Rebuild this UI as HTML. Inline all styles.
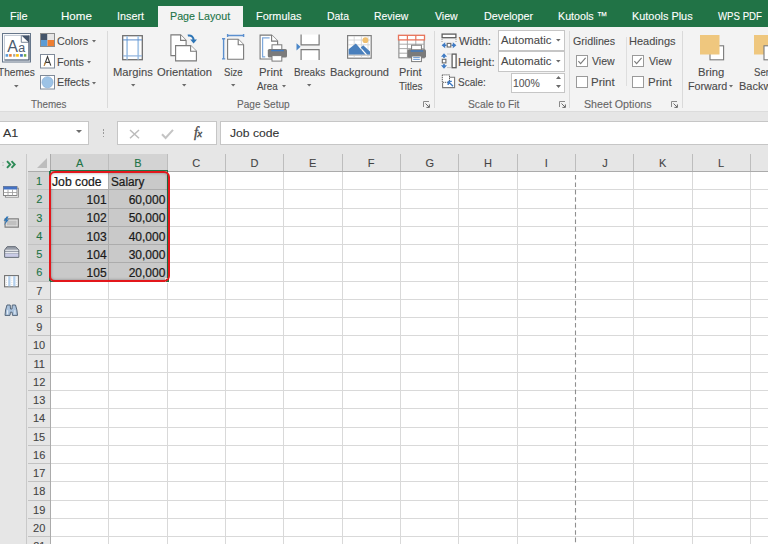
<!DOCTYPE html>
<html><head><meta charset="utf-8">
<style>
html,body{margin:0;padding:0;}
body{width:768px;height:544px;overflow:hidden;position:relative;background:#e6e6e6;font-family:"Liberation Sans",sans-serif;}
.a{position:absolute;}
.t{position:absolute;white-space:pre;line-height:1;transform-origin:0 0;-webkit-text-stroke:0.1px currentColor;font-family:"Liberation Sans",sans-serif;}
.sep{position:absolute;width:1px;background:#d2d2d2;}
.arr{position:absolute;width:0;height:0;border-left:2.5px solid transparent;border-right:2.5px solid transparent;border-top:3px solid #6a6a6a;}
svg{position:absolute;overflow:visible;}
</style></head><body>
<!-- tab bar -->
<div class="a" style="left:0;top:0;width:768px;height:27px;background:#217346"></div>
<div class="a" style="left:158px;top:5.5px;width:84.5px;height:22px;background:#f3f3f3"></div>
<!-- ribbon -->
<div class="a" style="left:0;top:27px;width:768px;height:83.8px;background:#f3f3f3;border-bottom:1px solid #dcdcdc"></div>
<div class="a" style="left:106.5px;top:31px;width:1px;height:77px;background:#dadada;"></div>
<div class="a" style="left:434px;top:31px;width:1px;height:77px;background:#dadada;"></div>
<div class="a" style="left:568.5px;top:31px;width:1px;height:77px;background:#dadada;"></div>
<div class="a" style="left:681.5px;top:31px;width:1px;height:77px;background:#dadada;"></div>
<div class="a" style="left:625.5px;top:37px;width:1px;height:49px;background:#dedede;"></div>
<div class="a" style="left:-1px;top:121.2px;width:89.5px;height:23.6px;background:#fff;box-sizing:border-box;border:1px solid #c6c6c6"></div>
<div class="a" style="left:76.2px;top:130.2px;width:0;height:0;border-left:3.4px solid transparent;border-right:3.4px solid transparent;border-top:3.6px solid #6d6d6d"></div>
<div class="a" style="left:102.5px;top:129px;width:1.2px;height:1.6px;background:#9a9a9a;"></div>
<div class="a" style="left:102.5px;top:132.3px;width:1.2px;height:1.6px;background:#9a9a9a;"></div>
<div class="a" style="left:102.5px;top:135.6px;width:1.2px;height:1.6px;background:#9a9a9a;"></div>
<div class="a" style="left:117px;top:121.2px;width:99.5px;height:23.6px;background:#fff;box-sizing:border-box;border:1px solid #c6c6c6"></div>
<div class="a" style="left:220px;top:121.2px;width:560px;height:23.6px;background:#fff;box-sizing:border-box;border:1px solid #c6c6c6"></div>
<svg style="left:128.5px;top:128.5px" width="11" height="10"><path d="M1 1L10 9.2M10 1L1 9.2" stroke="#bcbcbc" stroke-width="1.5" fill="none"/></svg>
<svg style="left:160.5px;top:128.5px" width="13" height="10.5"><path d="M1 5.2L4.6 9L12 0.8" stroke="#c4c4c4" stroke-width="2" fill="none"/></svg>
<div class="t" style="left:194px;top:126.2px;font-family:'Liberation Serif',serif;font-style:italic;font-size:14px;color:#4a4a4a;letter-spacing:-0.6px;-webkit-text-stroke:0.35px #4a4a4a">f<span style="font-size:11px">x</span></div>
<div class="a" style="left:25.8px;top:154px;width:1.6px;height:390px;background:#c9c9c9;"></div>
<div class="a" style="left:27.5px;top:171px;width:740.5px;height:373px;background:#fff;"></div>
<div class="a" style="left:27.5px;top:171px;width:23px;height:373px;background:#e6e6e6;"></div>
<div class="a" style="left:50.5px;top:154px;width:116.6666px;height:17px;background:#d3d3d3;"></div>
<div class="a" style="left:27.5px;top:171px;width:23px;height:109.5px;background:#d3d3d3;"></div>
<div class="a" style="left:50.0px;top:154px;width:1px;height:17px;background:#bdbdbd;"></div>
<div class="a" style="left:108.33330000000001px;top:171px;width:1px;height:373px;background:#d9d9d9;"></div>
<div class="a" style="left:108.33330000000001px;top:154px;width:1px;height:17px;background:#bdbdbd;"></div>
<div class="a" style="left:166.66660000000002px;top:171px;width:1px;height:373px;background:#d9d9d9;"></div>
<div class="a" style="left:166.66660000000002px;top:154px;width:1px;height:17px;background:#bdbdbd;"></div>
<div class="a" style="left:224.9999px;top:171px;width:1px;height:373px;background:#d9d9d9;"></div>
<div class="a" style="left:224.9999px;top:154px;width:1px;height:17px;background:#bdbdbd;"></div>
<div class="a" style="left:283.33320000000003px;top:171px;width:1px;height:373px;background:#d9d9d9;"></div>
<div class="a" style="left:283.33320000000003px;top:154px;width:1px;height:17px;background:#bdbdbd;"></div>
<div class="a" style="left:341.6665px;top:171px;width:1px;height:373px;background:#d9d9d9;"></div>
<div class="a" style="left:341.6665px;top:154px;width:1px;height:17px;background:#bdbdbd;"></div>
<div class="a" style="left:399.9998px;top:171px;width:1px;height:373px;background:#d9d9d9;"></div>
<div class="a" style="left:399.9998px;top:154px;width:1px;height:17px;background:#bdbdbd;"></div>
<div class="a" style="left:458.3331px;top:171px;width:1px;height:373px;background:#d9d9d9;"></div>
<div class="a" style="left:458.3331px;top:154px;width:1px;height:17px;background:#bdbdbd;"></div>
<div class="a" style="left:516.6664000000001px;top:171px;width:1px;height:373px;background:#d9d9d9;"></div>
<div class="a" style="left:516.6664000000001px;top:154px;width:1px;height:17px;background:#bdbdbd;"></div>
<div class="a" style="left:574.9997px;top:154px;width:1px;height:17px;background:#bdbdbd;"></div>
<div class="a" style="left:633.333px;top:171px;width:1px;height:373px;background:#d9d9d9;"></div>
<div class="a" style="left:633.333px;top:154px;width:1px;height:17px;background:#bdbdbd;"></div>
<div class="a" style="left:691.6663px;top:171px;width:1px;height:373px;background:#d9d9d9;"></div>
<div class="a" style="left:691.6663px;top:154px;width:1px;height:17px;background:#bdbdbd;"></div>
<div class="a" style="left:749.9996px;top:171px;width:1px;height:373px;background:#d9d9d9;"></div>
<div class="a" style="left:749.9996px;top:154px;width:1px;height:17px;background:#bdbdbd;"></div>
<div class="a" style="left:50.5px;top:189.4px;width:717.5px;height:1px;background:#d9d9d9;"></div>
<div class="a" style="left:27.5px;top:189.4px;width:23px;height:1px;background:#c2c2c2;"></div>
<div class="a" style="left:50.5px;top:207.65px;width:717.5px;height:1px;background:#d9d9d9;"></div>
<div class="a" style="left:27.5px;top:207.65px;width:23px;height:1px;background:#c2c2c2;"></div>
<div class="a" style="left:50.5px;top:225.9px;width:717.5px;height:1px;background:#d9d9d9;"></div>
<div class="a" style="left:27.5px;top:225.9px;width:23px;height:1px;background:#c2c2c2;"></div>
<div class="a" style="left:50.5px;top:244.15px;width:717.5px;height:1px;background:#d9d9d9;"></div>
<div class="a" style="left:27.5px;top:244.15px;width:23px;height:1px;background:#c2c2c2;"></div>
<div class="a" style="left:50.5px;top:262.40000000000003px;width:717.5px;height:1px;background:#d9d9d9;"></div>
<div class="a" style="left:27.5px;top:262.40000000000003px;width:23px;height:1px;background:#c2c2c2;"></div>
<div class="a" style="left:50.5px;top:280.65000000000003px;width:717.5px;height:1px;background:#d9d9d9;"></div>
<div class="a" style="left:27.5px;top:280.65000000000003px;width:23px;height:1px;background:#c2c2c2;"></div>
<div class="a" style="left:50.5px;top:298.90000000000003px;width:717.5px;height:1px;background:#d9d9d9;"></div>
<div class="a" style="left:27.5px;top:298.90000000000003px;width:23px;height:1px;background:#c2c2c2;"></div>
<div class="a" style="left:50.5px;top:317.15000000000003px;width:717.5px;height:1px;background:#d9d9d9;"></div>
<div class="a" style="left:27.5px;top:317.15000000000003px;width:23px;height:1px;background:#c2c2c2;"></div>
<div class="a" style="left:50.5px;top:335.40000000000003px;width:717.5px;height:1px;background:#d9d9d9;"></div>
<div class="a" style="left:27.5px;top:335.40000000000003px;width:23px;height:1px;background:#c2c2c2;"></div>
<div class="a" style="left:50.5px;top:353.65000000000003px;width:717.5px;height:1px;background:#d9d9d9;"></div>
<div class="a" style="left:27.5px;top:353.65000000000003px;width:23px;height:1px;background:#c2c2c2;"></div>
<div class="a" style="left:50.5px;top:371.90000000000003px;width:717.5px;height:1px;background:#d9d9d9;"></div>
<div class="a" style="left:27.5px;top:371.90000000000003px;width:23px;height:1px;background:#c2c2c2;"></div>
<div class="a" style="left:50.5px;top:390.15000000000003px;width:717.5px;height:1px;background:#d9d9d9;"></div>
<div class="a" style="left:27.5px;top:390.15000000000003px;width:23px;height:1px;background:#c2c2c2;"></div>
<div class="a" style="left:50.5px;top:408.40000000000003px;width:717.5px;height:1px;background:#d9d9d9;"></div>
<div class="a" style="left:27.5px;top:408.40000000000003px;width:23px;height:1px;background:#c2c2c2;"></div>
<div class="a" style="left:50.5px;top:426.65000000000003px;width:717.5px;height:1px;background:#d9d9d9;"></div>
<div class="a" style="left:27.5px;top:426.65000000000003px;width:23px;height:1px;background:#c2c2c2;"></div>
<div class="a" style="left:50.5px;top:444.90000000000003px;width:717.5px;height:1px;background:#d9d9d9;"></div>
<div class="a" style="left:27.5px;top:444.90000000000003px;width:23px;height:1px;background:#c2c2c2;"></div>
<div class="a" style="left:50.5px;top:463.15000000000003px;width:717.5px;height:1px;background:#d9d9d9;"></div>
<div class="a" style="left:27.5px;top:463.15000000000003px;width:23px;height:1px;background:#c2c2c2;"></div>
<div class="a" style="left:50.5px;top:481.40000000000003px;width:717.5px;height:1px;background:#d9d9d9;"></div>
<div class="a" style="left:27.5px;top:481.40000000000003px;width:23px;height:1px;background:#c2c2c2;"></div>
<div class="a" style="left:50.5px;top:499.65000000000003px;width:717.5px;height:1px;background:#d9d9d9;"></div>
<div class="a" style="left:27.5px;top:499.65000000000003px;width:23px;height:1px;background:#c2c2c2;"></div>
<div class="a" style="left:50.5px;top:517.9px;width:717.5px;height:1px;background:#d9d9d9;"></div>
<div class="a" style="left:27.5px;top:517.9px;width:23px;height:1px;background:#c2c2c2;"></div>
<div class="a" style="left:50.5px;top:536.15px;width:717.5px;height:1px;background:#d9d9d9;"></div>
<div class="a" style="left:27.5px;top:536.15px;width:23px;height:1px;background:#c2c2c2;"></div>
<div class="a" style="left:50.5px;top:554.4px;width:717.5px;height:1px;background:#d9d9d9;"></div>
<div class="a" style="left:27.5px;top:554.4px;width:23px;height:1px;background:#c2c2c2;"></div>
<div class="a" style="left:50.5px;top:171.3px;width:116.6666px;height:109.5px;background:rgba(40,40,40,0.25);"></div>
<div class="a" style="left:51.0px;top:171.8px;width:57.3333px;height:17.25px;background:#fff;"></div>
<div class="a" style="left:27.5px;top:170.8px;width:740.5px;height:1px;background:#ababab;"></div>
<div class="a" style="left:50px;top:154px;width:1px;height:390px;background:#ababab;"></div>
<div class="a" style="left:50.5px;top:169.8px;width:116.6666px;height:1.5px;background:#217346;"></div>
<div class="a" style="left:49px;top:171.3px;width:1.5px;height:109.5px;background:#217346;"></div>
<div class="a" style="left:49.5px;top:170.3px;width:118.6666px;height:111.5px;box-sizing:border-box;border:1.5px solid #217346"></div>
<div class="a" style="left:164.66660000000002px;top:278.3px;width:5px;height:5px;background:#217346;border:1px solid #fff;box-sizing:border-box"></div>
<svg style="left:37px;top:158.3px" width="10" height="10"><path d="M10 0L10 10L0 10Z" fill="#bdbdbd"/></svg>
<svg style="left:574.9px;top:175.4px" width="2" height="373"><path d="M0.5 0V373" stroke="#8f8f8f" stroke-width="1.1" stroke-dasharray="4.6 2.8"/></svg>
<div class="a" style="left:49.4px;top:171px;width:120.4px;height:111px;box-sizing:border-box;border:2.8px solid #e3161b;border-radius:6px;box-shadow:inset 0 0 3px rgba(0,0,0,0.35)"></div>
<svg style="left:2px;top:32.5px" width="29" height="29.5" viewBox="0 0 29 29.5"><rect x="0.5" y="0.5" width="28" height="28.5" fill="#f7f8fa" stroke="#66768a" stroke-width="1"/><rect x="2.5" y="2.5" width="24.5" height="24.5" fill="#fff" stroke="#c5ccd6" stroke-width="1"/><path d="M27 2.5V27H2.5" fill="none" stroke="#44546a" stroke-width="1.2"/><path d="M19.3 2.5H27V10Z" fill="#44546a"/><path d="M19.3 2.5V9.3H26.3" fill="#fff" stroke="#5a6a7e" stroke-width="0.8"/><text x="5.2" y="19.1" font-family="Liberation Sans" font-size="16" fill="#4c5b6f">A</text><text x="16.2" y="19.1" font-family="Liberation Sans" font-size="12.5" fill="#4c5b6f">a</text><rect x="3.6" y="21.1" width="2.6" height="2.6" fill="#5b9bd5"/><rect x="7.1" y="21.1" width="2.6" height="2.6" fill="#ed7d31"/><rect x="11.1" y="21.1" width="2.3" height="2.6" fill="#a5a5a5"/><rect x="14.1" y="21.1" width="2.7" height="2.6" fill="#ffc000"/><rect x="18.1" y="21.1" width="2.7" height="2.6" fill="#4472c4"/><rect x="21.9" y="21.1" width="2.4" height="2.6" fill="#70ad47"/></svg>
<svg style="left:40px;top:33px" width="15" height="14" viewBox="0 0 15 14"><rect x="0.5" y="0.5" width="14" height="13" fill="#fff" stroke="#8c8c8c"/><rect x="1" y="1" width="6.5" height="6" fill="#44546a"/><rect x="7.5" y="1" width="6.5" height="6" fill="#e7e6e6"/><rect x="1" y="7" width="6.5" height="6" fill="#5b9bd5"/><rect x="7.5" y="7" width="6.5" height="6" fill="#ed7d31"/></svg>
<svg style="left:40px;top:53.7px" width="15" height="14.5" viewBox="0 0 15 14.5"><rect x="0.5" y="0.5" width="14" height="13.5" fill="#fff" stroke="#7f8a99"/><path d="M4.2 11.6L7.5 2.6L10.8 11.6M5.4 8.4H9.6" fill="none" stroke="#3a3a3a" stroke-width="1.1"/><path d="M4.2 11.6L5.4 8.4" stroke="#e0902a" stroke-width="1"/></svg>
<svg style="left:40px;top:74.6px" width="15" height="14.5" viewBox="0 0 15 14.5"><rect x="0.5" y="0.5" width="14" height="13.5" fill="#fff" stroke="#7f8a99"/><circle cx="7.5" cy="7.25" r="5.6" fill="#9dc3e6" stroke="#7fa7d4" stroke-width="0.6"/></svg>
<svg style="left:122px;top:34.5px" width="21" height="25.5" viewBox="0 0 21 25.5"><rect x="0.7" y="0.7" width="19.6" height="24" fill="#fff" stroke="#6f6f6f" stroke-width="1.3"/><rect x="4.2" y="1" width="1.8" height="23.5" fill="#a9c8e8"/><rect x="15.3" y="1" width="1.8" height="23.5" fill="#a9c8e8"/><rect x="1" y="4.4" width="19" height="1" fill="#5b8fcf"/><rect x="1" y="20.3" width="19" height="1.2" fill="#8fb3de"/></svg>
<svg style="left:170px;top:33.5px" width="28" height="28" viewBox="0 0 28 28"><path d="M0.9 0.9H10.6L16.1 6.4V21.6H0.9Z" fill="#fff" stroke="#7a7a7a" stroke-width="1.1"/><path d="M10.6 0.9V6.4H16.1" fill="#fff" stroke="#7a7a7a" stroke-width="1.1"/><path d="M5.6 11.6H20.6L26.4 17.2V26.9H5.6Z" fill="#fff" stroke="#7a7a7a" stroke-width="1.1"/><path d="M20.6 11.6V17.2H26.4" fill="#fff" stroke="#7a7a7a" stroke-width="1.1"/><path d="M17.8 1.6C21.4 0.8 23.6 3 23.6 6.5" fill="none" stroke="#2e75b6" stroke-width="2"/><path d="M20.2 5.6L23.6 9.6L27 5.6Z" fill="#2e75b6"/></svg>
<svg style="left:222px;top:33.5px" width="23" height="26.5" viewBox="0 0 23 26.5"><path d="M5.6 1.5H21.6M5.6 0V3M21.6 0V3" stroke="#5b8fcf" stroke-width="1.4"/><path d="M1.6 5H1.6M1.6 4.6V25M0 4.8H3.2M0 24.9H3.2" stroke="#5b8fcf" stroke-width="1.4"/><path d="M5.6 5.3H16.2L21.6 10.7V25.2H5.6Z" fill="#fff" stroke="#7a7a7a" stroke-width="1.1"/><path d="M16.2 5.3V10.7H21.6" fill="#fff" stroke="#7a7a7a" stroke-width="1.1"/></svg>
<svg style="left:258.5px;top:34px" width="29" height="28" viewBox="0 0 29 28"><path d="M1.1 1.1H12.6L18.6 7.1V25H1.1Z" fill="#fff" stroke="#7a7a7a" stroke-width="1.1"/><path d="M12.6 1.1V7.1H18.6" fill="#fff" stroke="#7a7a7a" stroke-width="1.1"/><path d="M10.6 3.8H3.6V22.9H6.2" fill="none" stroke="#7fa9dc" stroke-width="1.2"/><rect x="13" y="10.8" width="9.8" height="5.8" fill="#fff" stroke="#7a7a7a" stroke-width="1"/><rect x="8.8" y="15" width="19.2" height="8.5" rx="1.6" fill="#7b7b7b"/><rect x="12.2" y="15.9" width="12.6" height="1.4" fill="#3f7bc4"/><rect x="13" y="21.6" width="9.8" height="5.5" fill="#fff" stroke="#7a7a7a" stroke-width="1"/></svg>
<svg style="left:295.5px;top:34px" width="24" height="26.5" viewBox="0 0 24 26.5"><path d="M5.1 0.6V10.8H23.1V0.6" fill="#fff" stroke="#7a7a7a" stroke-width="1.2"/><path d="M5.1 26V15.6H23.1V26" fill="#fff" stroke="#7a7a7a" stroke-width="1.2"/><path d="M0.5 9.2L4.5 12.8L0.5 16.4Z" fill="#4a86c8"/></svg>
<svg style="left:347px;top:35px" width="25" height="24" viewBox="0 0 25 24"><rect x="0.6" y="0.6" width="23.6" height="22.6" fill="#fff" stroke="#7f7f7f" stroke-width="1.2"/><path d="M1 5H24M1 9.8H24M7.2 1V23M14.4 1V23M21 1V23M1 19.8H24" stroke="#d0d0d0" stroke-width="0.8"/><path d="M1.6 19.7V14.2L8.8 8.6L18.6 19.7Z" fill="#4a80bd"/><path d="M13.8 12.6L16.2 10.2L23 16.6V19.7H20.3Z" fill="#4a80bd"/><rect x="1" y="19.7" width="23" height="1.2" fill="#c8c8c8"/><circle cx="18.4" cy="5.2" r="2.9" fill="#f0c070"/></svg>
<svg style="left:397.5px;top:35px" width="29" height="27" viewBox="0 0 29 27"><rect x="0.9" y="0.6" width="25.2" height="22.2" fill="#fff" stroke="#8a8a8a" stroke-width="1.1"/><path d="M0.9 9.2H26M0.9 13.6H26M0.9 18.2H26M9.4 4.6V23M17.8 4.6V23" stroke="#a0a0a0" stroke-width="0.9"/><rect x="0.5" y="0.3" width="26" height="4.6" fill="#fff" stroke="#e8735a" stroke-width="1.3"/><path d="M9.4 0.3V4.9M17.8 0.3V4.9" stroke="#e8735a" stroke-width="1.2"/><rect x="13.6" y="10.2" width="9.8" height="5.8" fill="#fff" stroke="#7a7a7a" stroke-width="1"/><rect x="9.4" y="14.2" width="18.6" height="8.6" rx="1.6" fill="#7b7b7b"/><rect x="12.6" y="15.3" width="12.6" height="1.4" fill="#3f7bc4"/><rect x="13.6" y="21" width="9.8" height="5.6" fill="#fff" stroke="#7a7a7a" stroke-width="1"/><path d="M15.2 22.6H21.8M15.2 24.4H21.8" stroke="#5b8fcf" stroke-width="0.9"/></svg>
<svg style="left:440.5px;top:32.5px" width="16" height="16" viewBox="0 0 16 16"><rect x="1.1" y="1.1" width="13.8" height="3.6" fill="#fff" stroke="#5e5e5e" stroke-width="1.3"/><path d="M1 6V10M15 6V10" stroke="#8a8a8a" stroke-width="0.9" stroke-dasharray="1 1"/><path d="M0.6 12.2L4.2 9.2V15.2Z M15.4 12.2L11.8 9.2V15.2Z" fill="#3f7bc4"/><path d="M3.5 12.2H5.5M10.5 12.2H12.5" stroke="#3f7bc4" stroke-width="1.6"/><rect x="6.2" y="10.4" width="3.6" height="3.6" fill="#fff" stroke="#6a6a6a" stroke-width="1.1"/></svg>
<svg style="left:440.5px;top:53px" width="16" height="16" viewBox="0 0 16 16"><path d="M3 0.2L0 3.8H6Z M3 15.8L0 12.2H6Z" fill="#3f7bc4"/><path d="M3 3V5M3 11V13" stroke="#3f7bc4" stroke-width="1.6"/><rect x="1.3" y="6.3" width="3.6" height="3.6" fill="#fff" stroke="#6a6a6a" stroke-width="1.1"/><path d="M6.5 1H10M6.5 14.6H10" stroke="#8a8a8a" stroke-width="0.9" stroke-dasharray="1 1"/><rect x="11.1" y="1.1" width="4" height="13.6" fill="#fff" stroke="#5e5e5e" stroke-width="1.3"/></svg>
<svg style="left:440.5px;top:74px" width="15" height="14.5" viewBox="0 0 15 14.5"><path d="M5 3.2H13.6V13.6H1.6V8.4" fill="#fff" stroke="#7a7a7a" stroke-width="1.1"/><rect x="1.3" y="0.9" width="7.2" height="7.4" fill="#fff" stroke="#5e5e5e" stroke-width="1" stroke-dasharray="1.3 0.7"/><path d="M12 12.2L7.8 8M7.2 7.4V11M7.2 7.4H10.8" fill="none" stroke="#3f7bc4" stroke-width="1.4"/></svg>
<div class="a" style="left:498.3px;top:30.3px;width:66.4px;height:20.3px;box-sizing:border-box;background:#fff;border:1px solid #c6c6c6"></div>
<div class="a" style="left:498.3px;top:51.3px;width:66.4px;height:20.3px;box-sizing:border-box;background:#fff;border:1px solid #c6c6c6"></div>
<div class="a" style="left:511.3px;top:72.5px;width:53.4px;height:20.3px;box-sizing:border-box;background:#fff;border:1px solid #c6c6c6"></div>
<svg style="left:555.8px;top:39.2px" width="4.6" height="2.6"><path d="M0 0H4.6L2.3 2.6Z" fill="#6a6a6a"/></svg>
<svg style="left:555.8px;top:60.4px" width="4.6" height="2.6"><path d="M0 0H4.6L2.3 2.6Z" fill="#6a6a6a"/></svg>
<svg style="left:555.5px;top:76px" width="5" height="12"><path d="M0 3L2.5 0L5 3Z M0 9L2.5 12L5 9Z" fill="#6a6a6a"/></svg>
<svg style="left:91.5px;top:39.7px" width="4" height="2.4"><path d="M0 0H4L2.0 2.4Z" fill="#6a6a6a"/></svg>
<svg style="left:86.8px;top:60.7px" width="4" height="2.4"><path d="M0 0H4L2.0 2.4Z" fill="#6a6a6a"/></svg>
<svg style="left:92.2px;top:81.5px" width="4" height="2.4"><path d="M0 0H4L2.0 2.4Z" fill="#6a6a6a"/></svg>
<svg style="left:13.6px;top:85px" width="4.6" height="2.6"><path d="M0 0H4.6L2.3 2.6Z" fill="#6a6a6a"/></svg>
<svg style="left:130.5px;top:84.4px" width="4.4" height="2.5"><path d="M0 0H4.4L2.2 2.5Z" fill="#6a6a6a"/></svg>
<svg style="left:182.2px;top:84.4px" width="4.4" height="2.5"><path d="M0 0H4.4L2.2 2.5Z" fill="#6a6a6a"/></svg>
<svg style="left:230.7px;top:84.4px" width="4.4" height="2.5"><path d="M0 0H4.4L2.2 2.5Z" fill="#6a6a6a"/></svg>
<svg style="left:282px;top:84.6px" width="4" height="2.4"><path d="M0 0H4L2.0 2.4Z" fill="#6a6a6a"/></svg>
<svg style="left:307.2px;top:84.4px" width="4.4" height="2.5"><path d="M0 0H4.4L2.2 2.5Z" fill="#6a6a6a"/></svg>
<svg style="left:729px;top:85px" width="4" height="2.4"><path d="M0 0H4L2.0 2.4Z" fill="#6a6a6a"/></svg>
<svg style="left:423.2px;top:101px" width="7" height="7"><path d="M0.5 6V0.5H6" fill="none" stroke="#8a8a8a" stroke-width="1"/><path d="M2.5 2.5L6.2 6.2M3.4 6.4H6.4V3.4" fill="none" stroke="#6a6a6a" stroke-width="1"/></svg>
<svg style="left:558.7px;top:101.2px" width="7" height="7"><path d="M0.5 6V0.5H6" fill="none" stroke="#8a8a8a" stroke-width="1"/><path d="M2.5 2.5L6.2 6.2M3.4 6.4H6.4V3.4" fill="none" stroke="#6a6a6a" stroke-width="1"/></svg>
<svg style="left:671px;top:101.3px" width="7" height="7"><path d="M0.5 6V0.5H6" fill="none" stroke="#8a8a8a" stroke-width="1"/><path d="M2.5 2.5L6.2 6.2M3.4 6.4H6.4V3.4" fill="none" stroke="#6a6a6a" stroke-width="1"/></svg>
<svg style="left:576px;top:54.8px" width="12" height="12" viewBox="0 0 12 12"><rect x="0.5" y="0.5" width="11" height="11" fill="#fff" stroke="#9a9a9a"/><path d="M2.4 6.2L4.6 8.6L9.6 2.8" fill="none" stroke="#7a7a7a" stroke-width="1.1"/></svg>
<svg style="left:576px;top:75.6px" width="12" height="12" viewBox="0 0 12 12"><rect x="0.5" y="0.5" width="11" height="11" fill="#fff" stroke="#9a9a9a"/></svg>
<svg style="left:632.2px;top:54.8px" width="12" height="12" viewBox="0 0 12 12"><rect x="0.5" y="0.5" width="11" height="11" fill="#fff" stroke="#9a9a9a"/><path d="M2.4 6.2L4.6 8.6L9.6 2.8" fill="none" stroke="#7a7a7a" stroke-width="1.1"/></svg>
<svg style="left:632.2px;top:75.6px" width="12" height="12" viewBox="0 0 12 12"><rect x="0.5" y="0.5" width="11" height="11" fill="#fff" stroke="#9a9a9a"/></svg>
<svg style="left:699.5px;top:34.5px" width="25" height="26" viewBox="0 0 25 26"><rect x="10" y="10.8" width="13.6" height="14" fill="#fff" stroke="#7a7a7a" stroke-width="1.1"/><rect x="0" y="0" width="19.5" height="19.5" fill="#efc77e"/></svg>
<svg style="left:754px;top:34.5px" width="25" height="26" viewBox="0 0 25 26"><rect x="0" y="0" width="19.5" height="19.5" fill="#efc77e"/><rect x="10" y="10.8" width="13.6" height="14" fill="#fff" stroke="#7a7a7a" stroke-width="1.1"/></svg>
<svg style="left:1.5px;top:159.5px" width="15" height="9" viewBox="0 0 15 9"><circle cx="1" cy="2.6" r="0.6" fill="#aaa"/><circle cx="1" cy="5.2" r="0.6" fill="#aaa"/><path d="M5 1.2L8.2 4.5L5 7.8M9.5 1.2L12.7 4.5L9.5 7.8" fill="none" stroke="#2e8b57" stroke-width="1.9"/></svg>
<svg style="left:2.5px;top:185.5px" width="16" height="12" viewBox="0 0 16 12"><rect x="2.4" y="2.2" width="13" height="9" fill="#fff" stroke="#8a8a8a" stroke-width="0.9"/><rect x="0.5" y="0.5" width="13.5" height="9" fill="#fff" stroke="#7a7a7a" stroke-width="0.9"/><rect x="0.5" y="0.5" width="13.5" height="3" fill="#4472c4"/><path d="M0.5 6.5H14M5 3.5V9.5M9.5 3.5V9.5" stroke="#9a9a9a" stroke-width="0.8"/></svg>
<svg style="left:2px;top:215.5px" width="17" height="12" viewBox="0 0 17 12"><rect x="3" y="2.8" width="13.4" height="8.4" fill="#c4c4c4" stroke="#7a7a7a" stroke-width="1"/><rect x="4.4" y="4.2" width="10.6" height="5.6" fill="#c0c0c0" stroke="#e8e8e8" stroke-width="0.6"/><path d="M4.6 0.4L1.6 4.8H4L2 9.2L7 3.6H4.8L6.6 0.4Z" fill="#2e75b6"/></svg>
<svg style="left:3.5px;top:245.5px" width="16" height="12" viewBox="0 0 16 12"><path d="M3.2 0.7H11.6L14.8 4V11.3H0.7V4Z" fill="#9aa0ab" stroke="#5d6470" stroke-width="1"/><path d="M1.2 4.3H14.3" stroke="#e9ebef" stroke-width="1.1"/><path d="M1.2 6.6H14.3" stroke="#f2f3f6" stroke-width="1"/><rect x="1.2" y="7.6" width="13.1" height="3.2" fill="#c9cbe6"/></svg>
<svg style="left:3.5px;top:275px" width="15" height="12.5" viewBox="0 0 15 12.5"><rect x="0.6" y="0.6" width="13.8" height="11.2" fill="#fff" stroke="#6f6f6f" stroke-width="1.1"/><rect x="4.2" y="1.1" width="2.3" height="10.2" fill="#b3cfec"/><rect x="9.2" y="1.1" width="2.3" height="10.2" fill="#b3cfec"/><path d="M2.4 2.5V11M7.8 2.5V11M12.8 2.5V11" stroke="#d8d8d8" stroke-width="1" stroke-dasharray="1 1.2"/></svg>
<svg style="left:3.5px;top:303.5px" width="14.5" height="12" viewBox="0 0 14.5 12"><path d="M1 11.4L1.6 6L3 1H6.2L6.5 5H8L8.3 1H11.5L12.9 6L13.5 11.4H8.5L8.1 8.2H6.4L6 11.4Z" fill="#aac2dc" stroke="#55667a" stroke-width="1"/><path d="M3.6 6.2V10.4M10.9 6.2V10.4" stroke="#e8f0f8" stroke-width="1"/></svg>
<div class="t" style="left:9.53px;top:11.23px;font-size:11.3px;color:#fff;transform:scaleX(0.9689);">File</div>
<div class="t" style="left:60.58px;top:11.23px;font-size:11.3px;color:#fff;transform:scaleX(1.0258);">Home</div>
<div class="t" style="left:116.74px;top:11.23px;font-size:11.3px;color:#fff;transform:scaleX(0.9570);">Insert</div>
<div class="t" style="left:169.65px;top:11.03px;font-size:11.3px;color:#217346;transform:scaleX(0.9485);">Page Layout</div>
<div class="t" style="left:255.73px;top:11.03px;font-size:11.3px;color:#fff;transform:scaleX(0.9652);">Formulas</div>
<div class="t" style="left:326.67px;top:11.03px;font-size:11.3px;color:#fff;transform:scaleX(0.9245);">Data</div>
<div class="t" style="left:374.47px;top:11.03px;font-size:11.3px;color:#fff;transform:scaleX(0.9243);">Review</div>
<div class="t" style="left:435.25px;top:11.03px;font-size:11.3px;color:#fff;transform:scaleX(0.9350);">View</div>
<div class="t" style="left:483.84px;top:11.03px;font-size:11.3px;color:#fff;transform:scaleX(0.9555);">Developer</div>
<div class="t" style="left:558.45px;top:11.03px;font-size:11.3px;color:#fff;transform:scaleX(0.9464);">Kutools ™</div>
<div class="t" style="left:632.13px;top:11.03px;font-size:11.3px;color:#fff;transform:scaleX(0.9657);">Kutools Plus</div>
<div class="t" style="left:718.26px;top:11.03px;font-size:11.3px;color:#fff;transform:scaleX(0.8533);">WPS PDF</div>
<div class="t" style="left:-1.98px;top:66.59px;font-size:11px;color:#4a4a4a;transform:scaleX(0.9238);">Themes</div>
<div class="t" style="left:57.36px;top:35.69px;font-size:11px;color:#4a4a4a;transform:scaleX(0.9810);">Colors</div>
<div class="t" style="left:57.02px;top:56.69px;font-size:11px;color:#4a4a4a;transform:scaleX(0.9748);">Fonts</div>
<div class="t" style="left:57.02px;top:77.29px;font-size:11px;color:#4a4a4a;transform:scaleX(0.9728);">Effects</div>
<div class="t" style="left:31.02px;top:98.99px;font-size:11px;color:#666;transform:scaleX(0.8932);">Themes</div>
<div class="t" style="left:112.59px;top:66.69px;font-size:11px;color:#4a4a4a;transform:scaleX(1.0166);">Margins</div>
<div class="t" style="left:156.69px;top:66.69px;font-size:11px;color:#4a4a4a;transform:scaleX(1.0201);">Orientation</div>
<div class="t" style="left:224.21px;top:66.69px;font-size:11px;color:#4a4a4a;transform:scaleX(0.8691);">Size</div>
<div class="t" style="left:258.87px;top:66.59px;font-size:11px;color:#4a4a4a;transform:scaleX(1.0341);">Print</div>
<div class="t" style="left:257.30px;top:80.59px;font-size:11px;color:#4a4a4a;transform:scaleX(0.8939);">Area</div>
<div class="t" style="left:294.18px;top:66.59px;font-size:11px;color:#4a4a4a;transform:scaleX(0.9095);">Breaks</div>
<div class="t" style="left:330.20px;top:66.59px;font-size:11px;color:#4a4a4a;transform:scaleX(1.0046);">Background</div>
<div class="t" style="left:398.90px;top:66.59px;font-size:11px;color:#4a4a4a;transform:scaleX(0.9972);">Print</div>
<div class="t" style="left:399.32px;top:80.89px;font-size:11px;color:#4a4a4a;transform:scaleX(0.9043);">Titles</div>
<div class="t" style="left:236.67px;top:98.99px;font-size:11px;color:#666;transform:scaleX(0.9168);">Page Setup</div>
<div class="t" style="left:458.50px;top:35.59px;font-size:11px;color:#4a4a4a;transform:scaleX(1.0259);">Width:</div>
<div class="t" style="left:457.55px;top:56.59px;font-size:11px;color:#4a4a4a;transform:scaleX(1.0531);">Height:</div>
<div class="t" style="left:458.09px;top:77.19px;font-size:11px;color:#4a4a4a;transform:scaleX(0.9086);">Scale:</div>
<div class="t" style="left:501.40px;top:35.29px;font-size:11px;color:#4a4a4a;transform:scaleX(1.0296);">Automatic</div>
<div class="t" style="left:501.40px;top:56.49px;font-size:11px;color:#4a4a4a;transform:scaleX(1.0296);">Automatic</div>
<div class="t" style="left:513.24px;top:77.79px;font-size:11px;color:#555;transform:scaleX(0.9498);">100%</div>
<div class="t" style="left:467.58px;top:98.99px;font-size:11px;color:#666;transform:scaleX(0.9337);">Scale to Fit</div>
<div class="t" style="left:573.07px;top:35.99px;font-size:11px;color:#4a4a4a;transform:scaleX(0.9693);">Gridlines</div>
<div class="t" style="left:592.10px;top:56.39px;font-size:11px;color:#4a4a4a;transform:scaleX(0.9578);">View</div>
<div class="t" style="left:591.16px;top:76.99px;font-size:11px;color:#4a4a4a;transform:scaleX(1.0479);">Print</div>
<div class="t" style="left:628.90px;top:35.89px;font-size:11px;color:#4a4a4a;transform:scaleX(1.0016);">Headings</div>
<div class="t" style="left:648.80px;top:56.39px;font-size:11px;color:#4a4a4a;transform:scaleX(0.9578);">View</div>
<div class="t" style="left:647.86px;top:76.99px;font-size:11px;color:#4a4a4a;transform:scaleX(1.0479);">Print</div>
<div class="t" style="left:583.76px;top:98.99px;font-size:11px;color:#666;transform:scaleX(0.9694);">Sheet Options</div>
<div class="t" style="left:698.38px;top:66.69px;font-size:11px;color:#4a4a4a;transform:scaleX(1.0244);">Bring</div>
<div class="t" style="left:687.62px;top:80.59px;font-size:11px;color:#4a4a4a;transform:scaleX(0.9749);">Forward</div>
<div class="t" style="left:754.21px;top:66.69px;font-size:11px;color:#4a4a4a;transform:scaleX(0.8709);">Send</div>
<div class="t" style="left:738.50px;top:80.59px;font-size:11px;color:#4a4a4a;transform:scaleX(0.9972);">Backward</div>
<div class="t" style="left:2.60px;top:128.19px;font-size:11px;color:#333;transform:scaleX(1.1363);">A1</div>
<div class="t" style="left:230.34px;top:127.57px;font-size:11.5px;color:#333;transform:scaleX(1.0559);">Job code</div>
<div class="t" style="left:52.25px;top:175.79px;font-size:12px;color:#1a1a1a;transform:scaleX(1.0160);-webkit-text-stroke:0.22px #1a1a1a">Job code</div>
<div class="t" style="left:110.71px;top:175.79px;font-size:12px;color:#1a1a1a;transform:scaleX(0.9817);-webkit-text-stroke:0.22px #1a1a1a">Salary</div>
<div class="t" style="left:86.58px;top:194.04px;font-size:12px;color:#1a1a1a;transform:scaleX(1.0000);-webkit-text-stroke:0.22px #1a1a1a">101</div>
<div class="t" style="left:128.70px;top:194.04px;font-size:12px;color:#1a1a1a;transform:scaleX(1.0000);-webkit-text-stroke:0.22px #1a1a1a">60,000</div>
<div class="t" style="left:86.58px;top:212.29px;font-size:12px;color:#1a1a1a;transform:scaleX(1.0000);-webkit-text-stroke:0.22px #1a1a1a">102</div>
<div class="t" style="left:128.70px;top:212.29px;font-size:12px;color:#1a1a1a;transform:scaleX(1.0000);-webkit-text-stroke:0.22px #1a1a1a">50,000</div>
<div class="t" style="left:86.58px;top:230.54px;font-size:12px;color:#1a1a1a;transform:scaleX(1.0000);-webkit-text-stroke:0.22px #1a1a1a">103</div>
<div class="t" style="left:128.70px;top:230.54px;font-size:12px;color:#1a1a1a;transform:scaleX(1.0000);-webkit-text-stroke:0.22px #1a1a1a">40,000</div>
<div class="t" style="left:86.58px;top:248.79px;font-size:12px;color:#1a1a1a;transform:scaleX(1.0000);-webkit-text-stroke:0.22px #1a1a1a">104</div>
<div class="t" style="left:128.70px;top:248.79px;font-size:12px;color:#1a1a1a;transform:scaleX(1.0000);-webkit-text-stroke:0.22px #1a1a1a">30,000</div>
<div class="t" style="left:86.58px;top:267.04px;font-size:12px;color:#1a1a1a;transform:scaleX(1.0000);-webkit-text-stroke:0.22px #1a1a1a">105</div>
<div class="t" style="left:128.70px;top:267.04px;font-size:12px;color:#1a1a1a;transform:scaleX(1.0000);-webkit-text-stroke:0.22px #1a1a1a">20,000</div>
<div class="t" style="left:75.99px;top:157.69px;font-size:11px;color:#217346;transform:scaleX(1.0000);">A</div>
<div class="t" style="left:134.15px;top:157.69px;font-size:11px;color:#217346;transform:scaleX(1.0000);">B</div>
<div class="t" style="left:192.28px;top:157.69px;font-size:11px;color:#444;transform:scaleX(1.0000);">C</div>
<div class="t" style="left:250.49px;top:157.69px;font-size:11px;color:#444;transform:scaleX(1.0000);">D</div>
<div class="t" style="left:309.10px;top:157.69px;font-size:11px;color:#444;transform:scaleX(1.0000);">E</div>
<div class="t" style="left:367.73px;top:157.69px;font-size:11px;color:#444;transform:scaleX(1.0000);">F</div>
<div class="t" style="left:425.52px;top:157.69px;font-size:11px;color:#444;transform:scaleX(1.0000);">G</div>
<div class="t" style="left:484.02px;top:157.69px;font-size:11px;color:#444;transform:scaleX(1.0000);">H</div>
<div class="t" style="left:544.81px;top:157.69px;font-size:11px;color:#444;transform:scaleX(1.0000);">I</div>
<div class="t" style="left:602.24px;top:157.69px;font-size:11px;color:#444;transform:scaleX(1.0000);">J</div>
<div class="t" style="left:658.92px;top:157.69px;font-size:11px;color:#444;transform:scaleX(1.0000);">K</div>
<div class="t" style="left:717.98px;top:157.69px;font-size:11px;color:#444;transform:scaleX(1.0000);">L</div>
<div class="t" style="left:36.10px;top:176.04px;font-size:11px;color:#217346;transform:scaleX(1.0000);">1</div>
<div class="t" style="left:36.22px;top:194.29px;font-size:11px;color:#217346;transform:scaleX(1.0000);">2</div>
<div class="t" style="left:36.27px;top:212.54px;font-size:11px;color:#217346;transform:scaleX(1.0000);">3</div>
<div class="t" style="left:36.27px;top:230.79px;font-size:11px;color:#217346;transform:scaleX(1.0000);">4</div>
<div class="t" style="left:36.25px;top:249.04px;font-size:11px;color:#217346;transform:scaleX(1.0000);">5</div>
<div class="t" style="left:36.20px;top:267.29px;font-size:11px;color:#217346;transform:scaleX(1.0000);">6</div>
<div class="t" style="left:36.22px;top:285.54px;font-size:11px;color:#444;transform:scaleX(1.0000);">7</div>
<div class="t" style="left:36.25px;top:303.79px;font-size:11px;color:#444;transform:scaleX(1.0000);">8</div>
<div class="t" style="left:36.25px;top:322.04px;font-size:11px;color:#444;transform:scaleX(1.0000);">9</div>
<div class="t" style="left:32.99px;top:340.29px;font-size:11px;color:#444;transform:scaleX(1.0000);">10</div>
<div class="t" style="left:33.45px;top:358.54px;font-size:11px;color:#444;transform:scaleX(1.0000);">11</div>
<div class="t" style="left:33.04px;top:376.79px;font-size:11px;color:#444;transform:scaleX(1.0000);">12</div>
<div class="t" style="left:33.02px;top:395.04px;font-size:11px;color:#444;transform:scaleX(1.0000);">13</div>
<div class="t" style="left:32.94px;top:413.29px;font-size:11px;color:#444;transform:scaleX(1.0000);">14</div>
<div class="t" style="left:32.99px;top:431.54px;font-size:11px;color:#444;transform:scaleX(1.0000);">15</div>
<div class="t" style="left:33.02px;top:449.79px;font-size:11px;color:#444;transform:scaleX(1.0000);">16</div>
<div class="t" style="left:33.04px;top:468.04px;font-size:11px;color:#444;transform:scaleX(1.0000);">17</div>
<div class="t" style="left:33.02px;top:486.29px;font-size:11px;color:#444;transform:scaleX(1.0000);">18</div>
<div class="t" style="left:33.04px;top:504.54px;font-size:11px;color:#444;transform:scaleX(1.0000);">19</div>
<div class="t" style="left:33.12px;top:522.79px;font-size:11px;color:#444;transform:scaleX(1.0000);">20</div>
<div class="t" style="left:33.17px;top:541.04px;font-size:11px;color:#444;transform:scaleX(1.0000);">21</div>
</body></html>
